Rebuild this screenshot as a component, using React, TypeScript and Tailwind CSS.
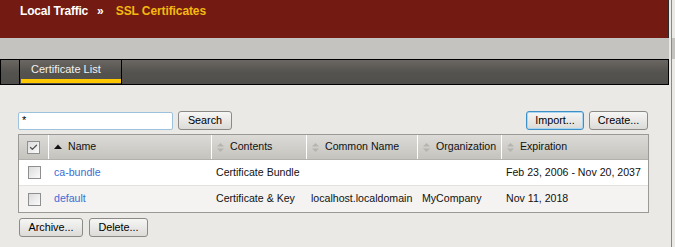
import { Check } from 'lucide-react';

const font = { fontFamily: '"Liberation Sans", Arial, sans-serif' };

const columns = [
  { label: 'Name', width: 'w-[163px]', sorted: true },
  { label: 'Contents', width: 'w-[95px]' },
  { label: 'Common Name', width: 'w-[111px]' },
  { label: 'Organization', width: 'w-[84px]' },
  { label: 'Expiration', width: 'flex-1' },
];

const rows = [
  { name: 'ca-bundle', contents: 'Certificate Bundle', cn: '', org: '', exp: 'Feb 23, 2006 - Nov 20, 2037', bg: 'bg-white' },
  { name: 'default', contents: 'Certificate & Key', cn: 'localhost.localdomain', org: 'MyCompany', exp: 'Nov 11, 2018', bg: 'bg-[#f4f3f1]' },
];

function Btn({ label, focus, className }: { label: string; focus?: boolean; className?: string }) {
  return (
    <button
      className={`h-[19px] rounded-[3px] border text-[10.8px] text-black bg-gradient-to-b from-[#f6f6f5] to-[#dcdbd8] ${
        focus ? 'border-[#3c8fc7] shadow-[inset_0_0_0_1px_#a9d5f2]' : 'border-[#8b8a86]'
      } ${className ?? ''}`}
    >
      {label}
    </button>
  );
}

function SortIcon({ sorted }: { sorted?: boolean }) {
  if (sorted) {
    return (
      <svg width="8" height="8" viewBox="0 0 8 8" className="mr-[6px]">
        <path d="M0 6 L4 1.5 L8 6 Z" fill="#111" />
      </svg>
    );
  }
  return (
    <svg width="7" height="9" viewBox="0 0 7 9" className="mr-[6px]">
      <path d="M0 3.5 L3.5 0 L7 3.5 Z" fill="#b5b4b0" />
      <path d="M0 5.5 L3.5 9 L7 5.5 Z" fill="#b5b4b0" />
    </svg>
  );
}

function Box({ checked }: { checked?: boolean }) {
  return (
    <div className="w-[13px] h-[13px] border border-[#8e8f8f] bg-gradient-to-br from-[#dcdcdc] to-[#fbfbfb] flex items-center justify-center">
      {checked && <Check className="w-[9px] h-[9px] text-[#555]" strokeWidth={3.5} />}
    </div>
  );
}

export default function App() {
  return (
    <div className="w-[675px] h-[247px] bg-[#ebe9e5] flex overflow-hidden" style={font}>
      <div className="w-[669px] flex flex-col">
        {/* Header */}
        <div className="h-[38px] bg-[#731b12] border-r border-[#2a2a2a] flex items-start pl-[20px] pt-[2px] text-[12px] font-bold">
          <span className="text-white tracking-[-0.2px]">Local Traffic</span>
          <span className="text-white ml-[9px]">»</span>
          <span className="text-[#f3b90f] ml-[12px] tracking-[-0.1px]">SSL Certificates</span>
        </div>
        <div className="h-[21px] bg-[#c4c3bf] w-[675px]" />
        {/* Tab bar */}
        <div className="h-[26px] border border-black bg-gradient-to-b from-[#6b6763] via-[#55534f] to-[#4f4e4a] flex">
          <div className="w-[19px] border-r border-black" />
          <div className="w-[102px] border-r border-black flex flex-col">
            <div className="flex-1 flex items-center pl-[11px] text-[11px] text-[#f2f2f2]">Certificate List</div>
            <div className="h-[4px] bg-[#ffc700] mb-[1px] ml-[1px]" />
          </div>
        </div>

        {/* Toolbar */}
        <div className="flex items-center mt-[26px] ml-[18px] h-[19px]">
          <div className="w-[155px] h-[18px] bg-white border border-[#9cc2dd] rounded-[2px] text-[11px] pl-[3px] leading-[14px]">
            *
          </div>
          <Btn label="Search" className="ml-[5px] w-[54px]" />
          <div className="flex-1" />
          <Btn label="Import..." focus className="w-[58px]" />
          <Btn label="Create..." className="ml-[5px] w-[59px] mr-[21px]" />
        </div>

        {/* Table */}
        <div className="ml-[18px] mt-[4px] w-[631px] border border-[#9a9995] text-[10.6px]">
          <div className="h-[25px] flex bg-gradient-to-b from-[#dcdbd7] to-[#c4c3be] border-b border-[#b2b1ad]">
            <div className="w-[30px] border-r border-white flex items-center justify-center">
              <Box checked />
            </div>
            {columns.map((c, i) => (
              <div
                key={c.label}
                className={`${c.width} flex items-center pl-[5px] text-[#111] ${i < columns.length - 1 ? 'border-r border-white' : ''}`}
              >
                <SortIcon sorted={c.sorted} />
                {c.label}
              </div>
            ))}
          </div>
          {rows.map((r, idx) => (
            <div key={r.name} className={`h-[26px] flex items-center ${r.bg} ${idx === 0 ? 'border-b border-[#e2e1de]' : ''}`}>
              <div className="w-[30px] flex items-center justify-center">
                <Box />
              </div>
              <div className="w-[163px] pl-[5px] text-[#3d6cd4]">{r.name}</div>
              <div className="w-[95px] pl-[4px] text-[#111]">{r.contents}</div>
              <div className="w-[111px] pl-[4px] text-[#111]">{r.cn}</div>
              <div className="w-[84px] pl-[4px] text-[#111]">{r.org}</div>
              <div className="flex-1 pl-[4px] text-[#111] whitespace-nowrap">{r.exp}</div>
            </div>
          ))}
        </div>

        <div className="flex ml-[19px] mt-[5px]">
          <Btn label="Archive..." className="w-[64px]" />
          <Btn label="Delete..." className="ml-[6px] w-[59px]" />
        </div>
      </div>
      <div className="w-[2px] bg-[#ebe9e5]" />
      <div className="w-[1px] bg-[#8a8985]" />
    </div>
  );
}
